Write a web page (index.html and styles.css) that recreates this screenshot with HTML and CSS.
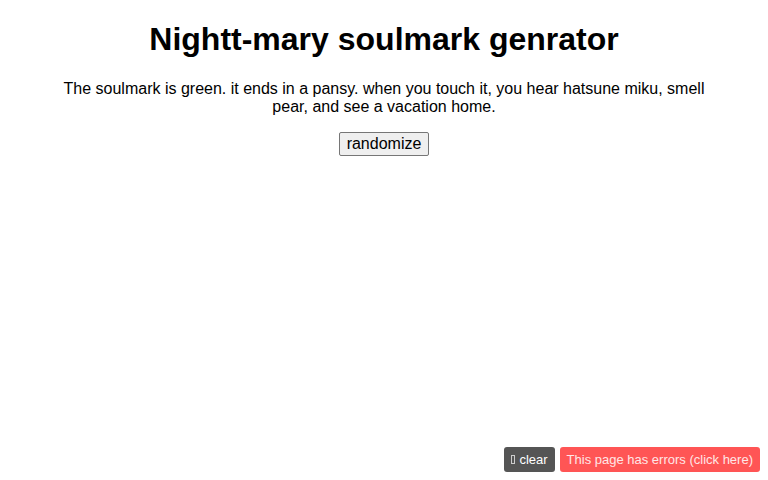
FILE: index.html
```html
<!DOCTYPE html>
<html>
<head>
<meta charset="utf-8">
<link rel="stylesheet" href="styles.css">
</head>
<body>
<h1 class="title">Nightt-mary soulmark genrator</h1>
<p class="result">The soulmark is green. it ends in a pansy. when you touch it, you hear hatsune miku, smell pear, and see a vacation home.</p>
<button class="randomize">randomize</button>
<div class="errbar">
  <button class="clear"><span class="tofu"></span> clear</button>
  <button class="errors">This page has errors (click here)</button>
</div>
</body>
</html>
```
FILE: styles.css
```css
html, body {
  margin: 0;
  padding: 0;
  background: #fff;
}
body {
  font-family: "Liberation Sans", Arial, sans-serif;
  text-align: center;
  color: #000;
}
.title {
  font-size: 32px;
  font-weight: bold;
  margin: 21.44px 0;
}
.result {
  font-size: 16px;
  max-width: 660px;
  margin: 16px auto;
}
.randomize {
  font-family: "Liberation Sans", Arial, sans-serif;
  font-size: 16px;
  padding: 1px 7px;
  height: 24px;
  border: 1px solid #767676;
  border-radius: 2px;
  background: #efefef;
  color: #000;
}
.errbar {
  position: fixed;
  right: 8px;
  bottom: 8px;
  display: flex;
  gap: 5px;
}
.errbar button {
  font-family: "Liberation Sans", Arial, sans-serif;
  font-size: 13px;
  border: none;
  border-radius: 3px;
  height: 25px;
  padding: 0 7px;
  display: flex;
  align-items: center;
}
.clear {
  background: #555;
  color: #fff;
}
.tofu {
  display: inline-block;
  width: 4px;
  height: 9px;
  border: 1px solid #ccc;
  margin-right: 4px;
  box-sizing: border-box;
}
.errors {
  background: #f55;
  color: #ffe6e6;
}
```
